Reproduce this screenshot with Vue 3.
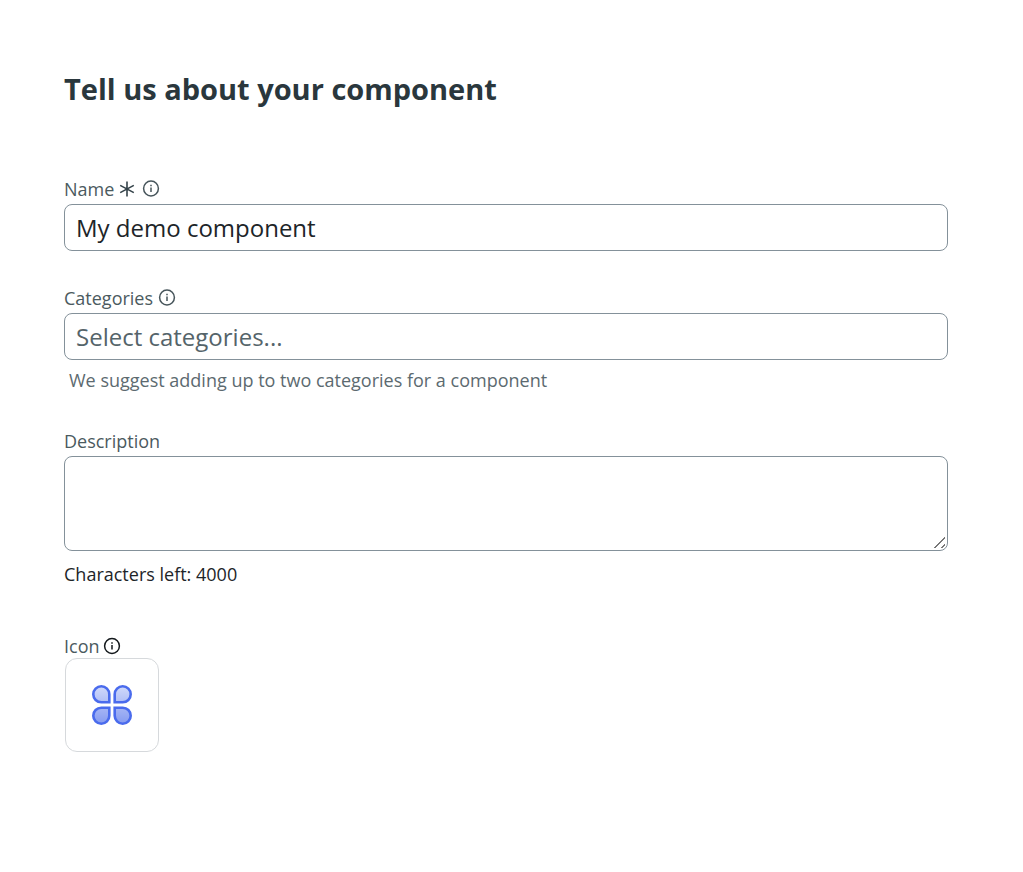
<template>
  <main class="page">
    <h1>Tell us about your component</h1>

    <form @submit.prevent>
      <div class="field">
        <div class="label-row">
          <label for="name">Name</label>
          <svg class="required" viewBox="0 0 16 16" role="img" aria-label="Required">
            <path d="M8 .5v15M1.2 4.4l13.6 7.2M14.8 4.4L1.2 11.6" />
          </svg>
          <svg class="info" viewBox="0 0 18 18" aria-hidden="true">
            <circle cx="9" cy="8.5" r="7.4" />
            <path d="M9 7.5v4.6M9 4.7v1.5" />
          </svg>
        </div>
        <input id="name" v-model="form.name" class="control" type="text" required />
      </div>

      <div class="field categories">
        <div class="label-row">
          <label for="categories">Categories</label>
          <svg class="info" viewBox="0 0 18 18" aria-hidden="true">
            <circle cx="9" cy="8.5" r="7.4" />
            <path d="M9 7.5v4.6M9 4.7v1.5" />
          </svg>
        </div>
        <input
          id="categories"
          v-model="form.categories"
          class="control"
          type="text"
          placeholder="Select categories..."
          aria-describedby="categories-hint"
        />
        <p id="categories-hint" class="hint">
          We suggest adding up to two categories for a component
        </p>
      </div>

      <div class="field description">
        <div class="label-row">
          <label for="description">Description</label>
        </div>
        <textarea
          id="description"
          v-model="form.description"
          class="control"
          :maxlength="maxLength"
        ></textarea>
        <p class="counter">Characters left: {{ charactersLeft }}</p>
      </div>

      <div class="field">
        <div class="label-row icon-label">
          <label for="icon">Icon</label>
          <svg class="info dark" viewBox="0 0 18 18" aria-hidden="true">
            <circle cx="9" cy="9" r="7.4" />
            <path d="M9 8v4.6M9 5.2v1.5" />
          </svg>
        </div>
        <button id="icon" class="icon-picker" type="button">
          <svg viewBox="0 0 42 42" aria-hidden="true">
            <defs>
              <linearGradient
                id="petals"
                gradientUnits="userSpaceOnUse"
                x1="0"
                y1="0"
                x2="0"
                y2="42"
              >
                <stop offset="0" stop-color="#d5ddfb" />
                <stop offset="1" stop-color="#8197f0" />
              </linearGradient>
            </defs>
            <path d="M18.3 18.3H10.3A8 8 0 1 1 18.3 10.3Z" />
            <path d="M23.7 18.3H31.7A8 8 0 1 0 23.7 10.3Z" />
            <path d="M18.3 23.7H10.3A8 8 0 1 0 18.3 31.7Z" />
            <path d="M23.7 23.7H31.7A8 8 0 1 1 23.7 31.7Z" />
          </svg>
        </button>
      </div>
    </form>
  </main>
</template>

<script setup>
import { computed, reactive } from "vue";

const maxLength = 4000;

const form = reactive({
  name: "My demo component",
  categories: "",
  description: "",
});

const charactersLeft = computed(() => maxLength - form.description.length);
</script>

<style>
body {
  background: #fff;
}
</style>

<style scoped>
.page {
  padding: 69px 75px 68px 64px;
  font-family: "Open Sans", "Noto Sans", sans-serif;
  font-size: 18px;
  line-height: 24px;
  color: #4b5a60;
}

h1 {
  margin: 0 0 68px;
  font-size: 29px;
  line-height: 40px;
  font-weight: 700;
  color: #2a373d;
}

.field {
  margin-bottom: 35px;
}

.field.categories {
  margin-bottom: 37px;
}

.field.description {
  margin-bottom: 48px;
}

.label-row {
  display: flex;
  align-items: center;
  height: 24px;
  margin-bottom: 3px;
}

.icon-label {
  margin-bottom: 0;
}

.required {
  width: 16px;
  height: 16px;
  margin-left: 5px;
  fill: none;
  stroke: #35434a;
  stroke-width: 1.6;
}

.info {
  width: 18px;
  height: 18px;
  margin-left: 7px;
  fill: none;
  stroke: #47555b;
  stroke-width: 1.5;
}

label + .info {
  margin-left: 5px;
}

label + .info.dark {
  margin-left: 3px;
  stroke: #14191c;
}

.control {
  display: block;
  box-sizing: border-box;
  width: 100%;
  height: 47px;
  padding: 0 11px;
  border: 1px solid #84919a;
  border-radius: 8px;
  background: #fff;
  color: #1d2529;
  font: inherit;
  font-size: 24px;
}

.control::placeholder {
  color: #55646a;
  opacity: 1;
}

textarea.control {
  height: 95px;
  padding: 8px 11px;
  resize: vertical;
}

textarea.control::-webkit-resizer {
  background: linear-gradient(
      135deg,
      transparent 46%,
      #777 46%,
      #777 56%,
      transparent 56%,
      transparent 78%,
      #777 78%,
      #777 90%,
      transparent 90%
    )
    2px 2px / 11px 11px no-repeat;
}

.hint {
  margin: 8px 5px 0;
  color: #5c6a70;
}

.counter {
  margin: 11px 0 0;
  color: #1d2529;
}

.icon-picker {
  display: flex;
  align-items: center;
  justify-content: center;
  width: 94px;
  height: 94px;
  margin: 0 1px;
  padding: 0;
  border: 1px solid #d6d9dc;
  border-radius: 12px;
  background: #fff;
}

.icon-picker svg {
  width: 42px;
  height: 42px;
  fill: url(#petals);
  stroke: #4a6bed;
  stroke-width: 2.6;
}
</style>
